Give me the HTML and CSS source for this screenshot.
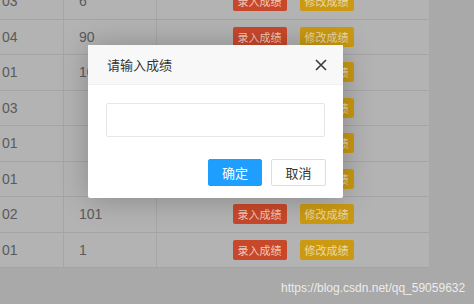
FILE: index.html
```html
<!DOCTYPE html>
<html>
<head>
  <title>成绩管理</title>
  <link rel="stylesheet" href="styles.css">
</head>
<body>
  <div class="grade-table">
    <div class="row">
      <div class="cell col-id">03</div>
      <div class="cell col-score">6</div>
      <div class="cell col-ops"><span class="btn btn-danger">录入成绩</span><span class="btn btn-warm">修改成绩</span></div>
    </div>
    <div class="row">
      <div class="cell col-id">04</div>
      <div class="cell col-score">90</div>
      <div class="cell col-ops"><span class="btn btn-danger">录入成绩</span><span class="btn btn-warm">修改成绩</span></div>
    </div>
    <div class="row">
      <div class="cell col-id">01</div>
      <div class="cell col-score">100</div>
      <div class="cell col-ops"><span class="btn btn-danger">录入成绩</span><span class="btn btn-warm">修改成绩</span></div>
    </div>
    <div class="row">
      <div class="cell col-id">03</div>
      <div class="cell col-score"></div>
      <div class="cell col-ops"><span class="btn btn-danger">录入成绩</span><span class="btn btn-warm">修改成绩</span></div>
    </div>
    <div class="row">
      <div class="cell col-id">01</div>
      <div class="cell col-score"></div>
      <div class="cell col-ops"><span class="btn btn-danger">录入成绩</span><span class="btn btn-warm">修改成绩</span></div>
    </div>
    <div class="row">
      <div class="cell col-id">01</div>
      <div class="cell col-score"></div>
      <div class="cell col-ops"><span class="btn btn-danger">录入成绩</span><span class="btn btn-warm">修改成绩</span></div>
    </div>
    <div class="row">
      <div class="cell col-id">02</div>
      <div class="cell col-score">101</div>
      <div class="cell col-ops"><span class="btn btn-danger">录入成绩</span><span class="btn btn-warm">修改成绩</span></div>
    </div>
    <div class="row">
      <div class="cell col-id">01</div>
      <div class="cell col-score">1</div>
      <div class="cell col-ops"><span class="btn btn-danger">录入成绩</span><span class="btn btn-warm">修改成绩</span></div>
    </div>
  </div>

  <div class="layer">
    <div class="layer-title">
      <span>请输入成绩</span>
      <svg class="layer-close" width="12" height="12" viewBox="0 0 12 12">
        <path d="M1 1 L11 11 M11 1 L1 11" stroke="#3a3a3a" stroke-width="1.6" fill="none"/>
      </svg>
    </div>
    <div class="layer-content">
      <input type="text" class="layer-input">
    </div>
    <div class="layer-btns">
      <span class="layer-btn layer-btn-ok">确定</span>
      <span class="layer-btn">取消</span>
    </div>
  </div>

  <div class="watermark">https://blog.csdn.net/qq_59059632</div>
</body>
</html>
```

FILE: styles.css
```css
body {
  margin: 0;
  background-color: #a9a9a9;
  font-family: 'Liberation Sans', 'Noto Sans CJK SC', sans-serif;
  width: 474px;
  height: 304px;
  overflow: hidden;
}
.grade-table {
  width: 429px;
  margin-top: -16px;
  background-color: #b3b3b3;
}
.row {
  display: grid;
  grid-template-columns: 64px 93px 272px;
  height: 35.5px;
  box-sizing: border-box;
  border-bottom: 1px solid #a4a4a4;
}
.cell {
  display: flex;
  align-items: center;
  font-size: 14px;
  color: #5a5a5a;
  border-right: 1px solid #a6a6a6;
}
.col-id {
  padding-left: 2px;
}
.col-score {
  padding-left: 15px;
}
.col-ops {
  justify-content: center;
  gap: 13px;
  border-right: none;
}
.btn {
  display: inline-block;
  height: 20px;
  line-height: 20px;
  padding: 0 5px;
  font-size: 11px;
  border-radius: 2px;
  font-family: 'Noto Sans CJK SC', sans-serif;
}
.btn-danger {
  background-color: #c8482b;
  color: #f1cabd;
}
.btn-warm {
  background-color: #cb9a12;
  color: #ecd9a6;
}
.layer {
  position: absolute;
  left: 88px;
  top: 45px;
  width: 255px;
  background-color: #fff;
  border-radius: 2px;
  box-shadow: 1px 1px 30px rgba(0, 0, 0, 0.25);
  font-family: 'Noto Sans CJK SC', sans-serif;
}
.layer-title {
  display: flex;
  align-items: center;
  justify-content: space-between;
  height: 39px;
  padding: 0 16px 0 19px;
  background-color: #f8f8f8;
  border-bottom: 1px solid #f0f0f0;
  font-size: 13px;
  color: #333;
}
.layer-close {
  display: block;
}
.layer-content {
  padding: 18px 18px 0 18px;
}
.layer-input {
  display: block;
  box-sizing: border-box;
  width: 219px;
  height: 34px;
  border: 1px solid #e6e6e6;
  border-radius: 2px;
  margin: 0;
}
.layer-btns {
  display: flex;
  justify-content: flex-end;
  gap: 9px;
  padding: 22px 17px 12px 0;
}
.layer-btn {
  box-sizing: border-box;
  width: 55px;
  height: 27px;
  line-height: 25px;
  text-align: center;
  font-size: 13px;
  color: #333;
  border: 1px solid #dedede;
  border-radius: 2px;
  background-color: #fff;
}
.layer-btn-ok {
  width: 54px;
  background-color: #1e9fff;
  border-color: #1e9fff;
  color: #fff;
}
.watermark {
  position: absolute;
  left: 281px;
  top: 281px;
  font-size: 12px;
  color: rgba(255, 255, 255, 0.8);
}
```
